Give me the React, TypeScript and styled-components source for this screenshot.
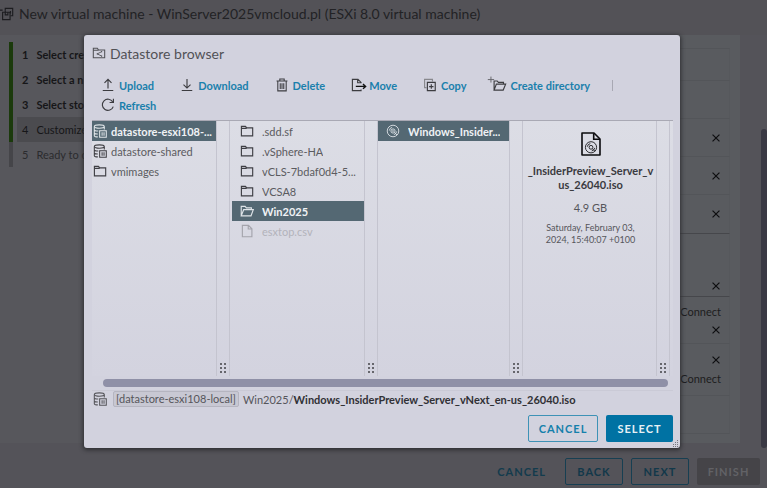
import React from 'react';
import styled, { createGlobalStyle } from 'styled-components';

const GlobalStyle = createGlobalStyle`
  *, *::before, *::after { box-sizing: border-box; }
  body { margin: 0; background: #545359; font-family: Lato, 'Open Sans', sans-serif; font-size: 11px; color: #56565b; }
  button { font: inherit; color: inherit; background: none; border: 0; padding: 0; cursor: pointer; }
  ul, ol { list-style: none; margin: 0; padding: 0; }
  h1, h2, p { margin: 0; font-weight: 400; }
  svg { display: block; flex: none; overflow: visible; }
`;

/* ---------- icons ---------- */

const IconSvg = styled.svg<{ $size: number }>`
  width: ${(p) => p.$size}px;
  height: ${(p) => p.$size}px;
`;

const Icon = ({ size = 14, ...rest }: React.SVGProps<SVGSVGElement> & { size?: number }) => (
  <IconSvg
    $size={size}
    viewBox="0 0 16 16"
    fill="none"
    stroke="currentColor"
    strokeWidth={1.3}
    aria-hidden
    {...(rest as object)}
  />
);

const VmIcon = () => (
  <Icon>
    <path d="M0 3.5h3M6 4V1.5h8.5V10H12" />
    <path d="M3 6h8.5v8.5H3z" />
    <path d="M6 4v5h3V6M12 4.5v3" />
  </Icon>
);
const BrowserIcon = () => (
  <Icon strokeWidth={1.2}>
    <path d="M1.5 13.5v-11h4.6l1.4 2h7v9zM1.5 4.8h6" />
    <path d="M11 6.5 6 9l5 2.5" strokeWidth="1" />
    <path d="M11 5.8v1.4M6 8.3v1.4M11 10.8v1.4" />
  </Icon>
);
const UploadIcon = () => (
  <Icon><path d="M8 12V1.6M4 5.5l4-4 4 4M2 14.3h12" /></Icon>
);
const DownloadIcon = () => (
  <Icon><path d="M8 1v10.4M4 7.5l4 4 4-4M2 14.3h12" /></Icon>
);
const TrashIcon = () => (
  <Icon strokeWidth={1.2}><path d="M1.8 3.5h12.4M5.5 3.2V1.2h5v2M3.2 3.5v11.2h9.6V3.5M6 6v6.5M8 6v6.5M10 6v6.5" /></Icon>
);
const MoveIcon = () => (
  <Icon>
    <path d="M11.5 6V5L8 1.6H1.6v12.8h9.9V13M7.6 1.6v3.8h3.8" />
    <path d="M5.5 9.6h10.8M13.7 6.8l3 2.8-3 2.8" stroke="#111" strokeWidth="1.6" />
  </Icon>
);
const CopyIcon = () => (
  <Icon>
    <path d="M4 11H1.8V1.5h9V4" stroke="#88888d" />
    <path d="M5 5h9v9.5H5z" />
    <path d="M9.5 7.2v5.2M7 9.8h5" />
  </Icon>
);
const AddFolderIcon = () => (
  <Icon>
    <path d="M-1.2-1.6v6.8M-4.8 1.8h7.2" stroke="#66666b" strokeWidth="1.1" />
    <path d="M2.4 13.8V3.4h3.5l1.4 1.6h5.8v2M2.4 13.8h10.4L15.6 7H5z" />
  </Icon>
);
const RefreshIcon = () => (
  <Icon>
    <path d="M14 9.8A6.4 6.4 0 1 1 13.4 4.4" />
    <path d="M14.2.8v4.4H9.8" />
  </Icon>
);
const StoreIcon = () => (
  <Icon strokeWidth={1.2}>
    <ellipse cx="7.2" cy="2.9" rx="5.7" ry="1.9" />
    <path d="M1.5 3v10.3c0 .8 1.8 1.4 4 1.4M12.9 3v3.2M1.5 6.5c0 1 1.8 1.5 4.5 1.5M1.5 10c0 .9 1.8 1.4 4 1.4" />
    <path d="M7.6 7.6h7.6v7.6H7.6zM10.4 9.5v4M12.6 9.5v4" />
  </Icon>
);
const FolderIcon = () => (
  <Icon><path d="M1.6 13.6V2.7h4.6l1.5 1.8h6.8v9.1zM1.6 5h6" /></Icon>
);
const OpenFolderIcon = () => (
  <Icon><path d="M1.4 13.5V2.7h4.4l1.5 1.8h5.7v2M1.4 13.5h11.2l2.6-7H4.2z" /></Icon>
);
const FileIcon = () => (
  <Icon><path d="M2.7 1.5h7l3.9 3.9v9.2H2.7zM9.4 1.7v4h4" /></Icon>
);
const DiscIcon = () => (
  <Icon strokeWidth={1}>
    <circle cx="8" cy="8" r="6.6" />
    <circle cx="8" cy="8" r="2.4" />
    <path d="M3.8 7.5A4.4 4.4 0 0 1 7 3.8M12.2 8.5A4.4 4.4 0 0 1 9 12.2M9.8 9.8l2.8 2.8" />
    <circle cx="8" cy="8" r=".5" />
  </Icon>
);
const IsoIcon = () => (
  <Icon viewBox="0 0 20 24" size={24} stroke="#0c0c0e" strokeWidth={1.6}>
    <path d="M1 1h12l6 6v16H1z" strokeLinejoin="round" />
    <path d="M12.7 1.2v6H19" />
    <g strokeWidth="1" stroke="#2c2c30">
      <circle cx="10" cy="15.3" r="5.6" />
      <circle cx="10" cy="15.3" r="1.9" />
      <path d="M6.3 14.7A3.8 3.8 0 0 1 9.3 11.6M13.7 15.9a3.8 3.8 0 0 1-3 3.1M11.5 16.8l2.4 2.4" />
    </g>
  </Icon>
);
const CloseIcon = () => (
  <Icon size={10} stroke="#0e0e10" strokeWidth={1.9}><path d="m2.5 2.5 11 11M13.5 2.5l-11 11" /></Icon>
);
const GripIcon = () => (
  <Icon viewBox="0 0 8 10" size={10} stroke="none" fill="#66666c">
    {[0, 4, 8].map((y) => (
      <React.Fragment key={y}>
        <rect x="1" y={y} width="2" height="2" />
        <rect x="5" y={y} width="2" height="2" />
      </React.Fragment>
    ))}
  </Icon>
);
const ResizeIcon = () => (
  <Icon viewBox="0 0 7 7" size={7} stroke="none" fill="#77777f">
    <path d="M5 0h1v1H5zM3 2h1v1H3zM5 2h1v1H5zM1 4h1v1H1zM3 4h1v1H3zM5 4h1v1H5zM1 6h1v1H1zM3 6h1v1H3zM5 6h1v1H5z" />
  </Icon>
);

/* ---------- wizard behind the dialog ---------- */

const Wizard = styled.div`
  display: flex;
  flex-direction: column;
  min-height: 100vh;
  position: relative;
  overflow: hidden;
  color: #1d1d20;
`;
const WizardHeader = styled.header`
  display: flex;
  align-items: center;
  gap: 5px;
  height: 35px;
  padding-bottom: 8px;
  background: #535257;
`;
const WizardTitle = styled.h1`
  font-size: 14px;
  white-space: nowrap;
  color: #222225;
`;
const WizardBody = styled.div`
  display: flex;
  flex: 1;
`;
const Steps = styled.ol`
  width: 150px;
  padding: 7px 0 0 9px;
  background: #57575c;
`;
const Step = styled.li<{ $state: 'done' | 'active' | 'todo' }>`
  display: flex;
  height: 25px;
  border-left: 4px solid ${(p) => (p.$state === 'todo' ? '#454549' : '#1b3a0c')};
  padding-left: 4px;
`;
const StepButton = styled.button<{ $state: 'done' | 'active' | 'todo' }>`
  display: flex;
  align-items: center;
  gap: 8px;
  flex: 1;
  padding-left: 5px;
  white-space: nowrap;
  text-align: left;
  font-weight: ${(p) => (p.$state === 'done' ? 700 : 400)};
  color: ${(p) => (p.$state === 'todo' ? '#2b2b2e' : '#161618')};
  background: ${(p) => (p.$state === 'active' ? '#4b4b4f' : 'transparent')};
`;
const Settings = styled.section`
  flex: 1;
  padding: 13px 10px 9px;
  background: #595b5f;
`;
const Setting = styled.div<{ $h: number; $strong?: boolean; $low?: boolean }>`
  display: flex;
  flex-direction: column;
  align-items: flex-end;
  justify-content: ${(p) => (p.$low ? 'flex-end' : 'center')};
  gap: 7px;
  height: ${(p) => p.$h}px;
  padding: 0 8px ${(p) => (p.$low ? 5 : 0)}px 0;
  border-bottom: 1px solid ${(p) => (p.$strong ? '#46474b' : '#535559')};
  border-right: 1px solid #56585c;
  &:first-child { border-top: 1px solid #535559; }
`;
const Remove = styled.button`
  display: grid;
  place-items: center;
  width: 10px;
  height: 10px;
`;
const ScrollGutter = styled.div`
  display: flex;
  justify-content: flex-end;
  width: 27px;
  padding-top: 94px;
  background: #545359;
`;
const ScrollThumb = styled.div`
  width: 6px;
  margin-bottom: -5px;
  border-radius: 3px;
  background: #3a3944;
`;
const WizardFooter = styled.footer`
  display: flex;
  justify-content: flex-end;
  align-items: center;
  gap: 8px;
  height: 45px;
  padding: 12px 7px 0 0;
`;

type Look = 'plain' | 'dimOutline' | 'disabled' | 'outline' | 'primary';
const looks: Record<Look, string> = {
  plain: 'color: #133b4d; padding: 0 11px;',
  dimOutline: 'color: #12384a; border: 1px solid #173f52; width: 58px;',
  disabled: 'color: #626266; background: #454448; width: 63px;',
  outline: 'color: #1580ab; border: 1px solid #3e92b6; width: 70px;',
  primary: 'color: #e6f1f6; background: #0072a3; width: 67px;',
};
const ActionButton = styled.button<{ $look: Look }>`
  height: 27px;
  border-radius: 2px;
  font-weight: 700;
  letter-spacing: 1px;
  text-transform: uppercase;
  ${(p) => looks[p.$look]}
`;

/* ---------- dialog ---------- */

const Overlay = styled.div`
  position: absolute;
  inset: 0;
  padding: 35px 87px 40px 84px;
`;
const Dialog = styled.div`
  position: relative;
  display: flex;
  flex-direction: column;
  height: 100%;
  padding: 10px 7px 6px 8px;
  border-radius: 3px;
  background: #d2d2de;
  box-shadow: 0 1px 4px 1px #2e2e32;
  color: #56565b;
`;
const DialogTitle = styled.h2`
  display: flex;
  align-items: center;
  gap: 4px;
  height: 16px;
  font-size: 14px;
  color: #515156;
`;
const Toolbar = styled.div`
  display: flex;
  flex-wrap: wrap;
  column-gap: 26px;
  padding: 14px 52px 5px 9px;
`;
const Tool = styled.button`
  display: flex;
  align-items: center;
  gap: 4px;
  height: 20px;
  font-weight: 700;
  color: #1a80ac;
  white-space: nowrap;
  svg { color: #3c3c40; }
`;
const ToolDivider = styled.span`
  width: 1px;
  height: 11px;
  align-self: center;
  margin-left: -4px;
  background: #a8a8b3;
`;
const Columns = styled.div`
  display: grid;
  grid-template-columns: minmax(0, 124fr) 14px minmax(0, 134fr) 14px minmax(0, 131fr) 14px minmax(0, 133fr) 14px;
  flex: 1;
  padding-right: 3px;
  border-top: 1px solid #a9a9b4;
  background: linear-gradient(#dcdde5, #d3d3df);
`;
const Divider = styled.div`
  display: flex;
  align-items: flex-end;
  justify-content: center;
  padding-bottom: 3px;
  border-left: 1px solid #c4c4cf;
  border-right: 1px solid #c4c4cf;
`;
const List = styled.ul<{ $inset?: boolean }>`
  padding-left: ${(p) => (p.$inset ? 2 : 0)}px;
`;
const Entry = styled.button<{ $selected?: boolean; $faded?: boolean; $inset?: boolean }>`
  display: flex;
  align-items: center;
  gap: ${(p) => (p.$inset ? 8 : 4)}px;
  width: 100%;
  height: 20px;
  padding: 0 ${(p) => (p.$selected ? 4 : 8)}px 0 ${(p) => (p.$inset ? 8 : 1)}px;
  text-align: left;
  font-weight: ${(p) => (p.$selected ? 700 : 400)};
  color: ${(p) => (p.$selected ? '#f0f2f5' : p.$faded ? '#b3b3bb' : '#5b5b60')};
  background: ${(p) => (p.$selected ? '#546873' : 'transparent')};
  svg { color: ${(p) => (p.$selected ? '#dfe4e8' : p.$faded ? '#a4a4ac' : '#3f3f44')}; }
`;
const EntryName = styled.span`
  overflow: hidden;
  text-overflow: ellipsis;
  white-space: nowrap;
`;
const Preview = styled.div`
  display: flex;
  flex-direction: column;
  align-items: center;
  padding: 11px 0 0 2px;
  overflow: hidden;
  text-align: center;
`;
const PreviewName = styled.p`
  align-self: stretch;
  padding-top: 8px;
  line-height: 14px;
  font-weight: 700;
  color: #3a3a3f;
  white-space: nowrap;
`;
const PreviewSize = styled.p`
  padding-top: 8px;
  line-height: 16px;
`;
const PreviewDate = styled.p`
  padding-top: 6px;
  font-size: 9px;
  line-height: 12px;
`;
const HScroll = styled.div`
  height: 8px;
  margin: 3px 5px 3px 11px;
  border-radius: 4px;
  background: #8f90a7;
`;
const PathBar = styled.div`
  display: flex;
  align-items: center;
  height: 17px;
  padding-left: 1px;
  border-top: 1px solid #cacad6;
  white-space: nowrap;
`;
const StoreTag = styled.span`
  margin: 0 4px 0 6px;
  padding: 0 2px;
  line-height: 14px;
  border: 1px solid #b5b5c0;
  border-radius: 2px;
  background: #c8c8d3;
`;
const FileName = styled.strong`
  color: #303035;
`;
const DialogActions = styled.div`
  display: flex;
  justify-content: flex-end;
  gap: 8px;
  padding-top: 8px;
`;
const ResizeCorner = styled.span`
  position: absolute;
  right: 1px;
  bottom: 1px;
`;

const steps = [
  ['Select cre', 'done'],
  ['Select a n', 'done'],
  ['Select sto', 'done'],
  ['Customize', 'active'],
  ['Ready to c', 'todo'],
] as const;

const settings = [
  { h: 33 },
  { h: 38 },
  { h: 38, parts: ['x'] },
  { h: 38, parts: ['x'] },
  { h: 39, parts: ['x'], strong: true },
  { h: 63, parts: ['x'], strong: true, low: true },
  { h: 47, parts: ['Connect', 'x'] },
  { h: 52, parts: ['x', 'Connect'] },
  { h: 38 },
];

const tools = [
  [UploadIcon, 'Upload'],
  [DownloadIcon, 'Download'],
  [TrashIcon, 'Delete'],
  [MoveIcon, 'Move'],
  [CopyIcon, 'Copy'],
  [AddFolderIcon, 'Create directory'],
] as const;

type Item = { icon: React.ComponentType; name: string; selected?: boolean; faded?: boolean };

const stores: Item[] = [
  { icon: StoreIcon, name: 'datastore-esxi108-...', selected: true },
  { icon: StoreIcon, name: 'datastore-shared' },
  { icon: FolderIcon, name: 'vmimages' },
];
const folders: Item[] = [
  { icon: FolderIcon, name: '.sdd.sf' },
  { icon: FolderIcon, name: '.vSphere-HA' },
  { icon: FolderIcon, name: 'vCLS-7bdaf0d4-5...' },
  { icon: FolderIcon, name: 'VCSA8' },
  { icon: OpenFolderIcon, name: 'Win2025', selected: true },
  { icon: FileIcon, name: 'esxtop.csv', faded: true },
];
const files: Item[] = [{ icon: DiscIcon, name: 'Windows_Insider...', selected: true }];

const FileList = ({ items, inset, pad }: { items: Item[]; inset?: boolean; pad?: boolean }) => (
  <List $inset={pad}>
    {items.map(({ icon: Glyph, name, selected, faded }) => (
      <li key={name}>
        <Entry $selected={selected} $faded={faded} $inset={inset}>
          <Glyph />
          <EntryName>{name}</EntryName>
        </Entry>
      </li>
    ))}
  </List>
);

const Handle = () => <Divider><GripIcon /></Divider>;

export default function App() {
  return (
    <>
      <GlobalStyle />
      <Wizard>
        <WizardHeader>
          <VmIcon />
          <WizardTitle>New virtual machine - WinServer2025vmcloud.pl (ESXi 8.0 virtual machine)</WizardTitle>
        </WizardHeader>
        <WizardBody>
          <Steps>
            {steps.map(([label, state], i) => (
              <Step key={label} $state={state}>
                <StepButton $state={state}><span>{i + 1}</span><span>{label}</span></StepButton>
              </Step>
            ))}
          </Steps>
          <Settings>
            {settings.map(({ h, parts = [], strong, low }, i) => (
              <Setting key={i} $h={h} $strong={strong} $low={low}>
                {parts.map((part) =>
                  part === 'x'
                    ? <Remove key={part} aria-label="Remove device"><CloseIcon /></Remove>
                    : <span key={part}>{part}</span>
                )}
              </Setting>
            ))}
          </Settings>
          <ScrollGutter><ScrollThumb /></ScrollGutter>
        </WizardBody>
        <WizardFooter>
          <ActionButton $look="plain">Cancel</ActionButton>
          <ActionButton $look="dimOutline">Back</ActionButton>
          <ActionButton $look="dimOutline">Next</ActionButton>
          <ActionButton $look="disabled" disabled>Finish</ActionButton>
        </WizardFooter>

        <Overlay>
          <Dialog role="dialog" aria-labelledby="dialog-title">
            <DialogTitle id="dialog-title"><BrowserIcon />Datastore browser</DialogTitle>
            <Toolbar>
              {tools.map(([Glyph, label]) => (
                <Tool key={label}><Glyph />{label}</Tool>
              ))}
              <ToolDivider />
              <Tool><RefreshIcon />Refresh</Tool>
            </Toolbar>
            <Columns>
              <FileList items={stores} />
              <Handle />
              <FileList items={folders} inset pad />
              <Handle />
              <FileList items={files} inset />
              <Handle />
              <Preview>
                <IsoIcon />
                <PreviewName>_InsiderPreview_Server_v<br />us_26040.iso</PreviewName>
                <PreviewSize>4.9 GB</PreviewSize>
                <PreviewDate>Saturday, February 03,<br />2024, 15:40:07 +0100</PreviewDate>
              </Preview>
              <Handle />
            </Columns>
            <HScroll />
            <PathBar>
              <StoreIcon />
              <StoreTag>[datastore-esxi108-local]</StoreTag>
              <span>Win2025/<FileName>Windows_InsiderPreview_Server_vNext_en-us_26040.iso</FileName></span>
            </PathBar>
            <DialogActions>
              <ActionButton $look="outline">Cancel</ActionButton>
              <ActionButton $look="primary">Select</ActionButton>
            </DialogActions>
            <ResizeCorner><ResizeIcon /></ResizeCorner>
          </Dialog>
        </Overlay>
      </Wizard>
    </>
  );
}
